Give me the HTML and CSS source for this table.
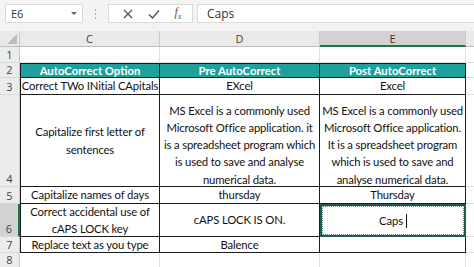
FILE: index.html
```html
<!DOCTYPE html>
<html>
<head>
<meta charset="utf-8">
<link rel="stylesheet" href="styles.css">
</head>
<body>
<div class="app">
  <div class="formula-bar">
    <div class="namebox"><span>E6</span><span class="caret"></span></div>
    <div class="grip"><i></i><i></i><i></i></div>
    <div class="fx-buttons">
      <svg width="12" height="12" viewBox="0 0 12 12"><path d="M2 2 L10 10 M10 2 L2 10" stroke="#555" stroke-width="1.3" fill="none"/></svg>
      <svg width="14" height="12" viewBox="0 0 14 12"><path d="M2 6.5 L5.5 10 L12 2.5" stroke="#555" stroke-width="1.5" fill="none"/></svg>
      <span class="fx">f<sub>x</sub></span>
    </div>
    <div class="formula-input">Caps</div>
  </div>

  <div class="sheet">
    <div class="corner"><span class="tri"></span></div>
    <div class="colhead">C</div>
    <div class="colhead">D</div>
    <div class="colhead sel">E</div>
    <div class="colhead rest"></div>

    <div class="rowhead">1</div>
    <div class="cell blank"></div><div class="cell blank"></div><div class="cell blank"></div><div class="cell blank rest"></div>

    <div class="rowhead">2</div>
    <div class="cell th l">AutoCorrect Option</div>
    <div class="cell th">Pre AutoCorrect</div>
    <div class="cell th">Post AutoCorrect</div>
    <div class="cell blank rest"></div>

    <div class="rowhead">3</div>
    <div class="cell td l">Correct TWo INitial CApitals</div>
    <div class="cell td">EXcel</div>
    <div class="cell td">Excel</div>
    <div class="cell blank rest"></div>

    <div class="rowhead">4</div>
    <div class="cell td l">Capitalize first letter of<br>sentences</div>
    <div class="cell td long"><span class="wrap">MS Excel is a commonly used<br>Microsoft Office application. it<br>is a spreadsheet program which<br>is used to save and analyse<br>numerical data.</span></div>
    <div class="cell td long"><span class="wrap">MS Excel is a commonly used<br>Microsoft Office application.<br>It is a spreadsheet program<br>which is used to save and<br>analyse numerical data.</span></div>
    <div class="cell blank rest"></div>

    <div class="rowhead">5</div>
    <div class="cell td l">Capitalize names of days</div>
    <div class="cell td">thursday</div>
    <div class="cell td">Thursday</div>
    <div class="cell blank rest"></div>

    <div class="rowhead sel">6</div>
    <div class="cell td l">Correct accidental use of<br>cAPS LOCK key</div>
    <div class="cell td">cAPS LOCK IS ON.</div>
    <div class="cell td active"><span>Caps</span><span class="cursor"></span></div>
    <div class="cell blank rest"></div>

    <div class="rowhead">7</div>
    <div class="cell td l last">Replace text as you type</div>
    <div class="cell td last">Balence</div>
    <div class="cell td last"></div>
    <div class="cell blank rest"></div>

    <div class="rowhead">8</div>
    <div class="cell blank"></div><div class="cell blank"></div><div class="cell blank"></div><div class="cell blank rest"></div>
  </div>
</div>
</body>
</html>
```

FILE: styles.css
```css
* { box-sizing: border-box; }
html, body { margin: 0; padding: 0; }
body {
  width: 474px;
  height: 267px;
  overflow: hidden;
  background: #ffffff;
  font-family: Lato, "Open Sans", sans-serif;
}
.app { width: 474px; height: 267px; display: flex; flex-direction: column; }

.formula-bar {
  height: 31px;
  background: #f3f3f3;
  display: flex;
  align-items: flex-start;
  padding: 4px 0 0 5px;
  flex-shrink: 0;
}
.namebox {
  width: 78px;
  height: 19px;
  background: #fff;
  border: 1px solid #dadada;
  display: flex;
  align-items: center;
  justify-content: space-between;
  padding: 0 4px 0 5px;
  font-size: 11px;
  color: #333;
  font-family: "Open Sans", sans-serif;
}
.caret {
  width: 0; height: 0;
  border-left: 3px solid transparent;
  border-right: 3px solid transparent;
  border-top: 3px solid #666;
  margin-right: 1px;
}
.grip {
  width: 25px;
  height: 19px;
  display: flex;
  flex-direction: column;
  align-items: center;
  justify-content: center;
  gap: 2px;
}
.grip i { display: block; width: 1px; height: 2px; background: #aaa; }
.fx-buttons {
  width: 85px;
  height: 19px;
  background: #fff;
  border: 1px solid #dadada;
  display: flex;
  align-items: center;
  justify-content: space-around;
  padding: 0 4px 0 6px;
}
.fx {
  font-family: "Liberation Serif", serif;
  font-style: italic;
  font-size: 12px;
  color: #555;
  line-height: 1;
}
.fx sub { font-size: 8px; }
.formula-input {
  flex: 1;
  height: 19px;
  margin-left: 4px;
  background: #fff;
  border: 1px solid #dadada;
  border-right: none;
  font-family: "Open Sans", sans-serif;
  font-size: 12px;
  color: #333;
  padding-left: 9px;
  line-height: 17px;
}

.sheet {
  flex: 1;
  display: grid;
  grid-template-columns: 20px 140px 160px 146px 1fr;
  grid-template-rows: 16px 16px 15px 17px 92px 17px 33px 16px 1fr;
  background: #fff;
}
.corner {
  background: #e9e9e9;
  border-right: 1px solid #c8c8c8;
  border-bottom: 1px solid #bdbdbd;
  position: relative;
}
.tri {
  position: absolute;
  right: 2px;
  bottom: 2px;
  width: 0; height: 0;
  border-left: 10px solid transparent;
  border-bottom: 10px solid #bdbdbd;
}
.colhead {
  background: #e9e9e9;
  border-right: 1px solid #c8c8c8;
  border-bottom: 1px solid #bdbdbd;
  font-family: "Open Sans", sans-serif;
  font-size: 11px;
  color: #444;
  display: flex;
  align-items: center;
  justify-content: center;
}
.colhead.sel {
  background: #d2d2d2;
  border-bottom: 2px solid #217346;
  color: #333;
}
.colhead.rest { border-right: none; }
.rowhead {
  background: #ececec;
  border-right: 1px solid #c8c8c8;
  border-bottom: 1px solid #d8d8d8;
  font-family: "Open Sans", sans-serif;
  font-size: 11px;
  color: #444;
  display: flex;
  align-items: flex-end;
  justify-content: center;
  line-height: 14px;
  padding-bottom: 0;
}
.rowhead.sel { background: #d2d2d2; border-right: 2px solid #217346; }

.cell {
  font-size: 11.3px;
  letter-spacing: -0.15px;
  color: #111;
  display: flex;
  align-items: center;
  justify-content: center;
  text-align: center;
  line-height: 17.3px;
  white-space: nowrap;
}
.cell.blank { border-right: 1px solid #e1e1e1; border-bottom: 1px solid #e1e1e1; }
.cell.blank.rest { border-right: none; background: #fff; }
.cell.th {
  background: #1fa09c;
  color: #fff;
  font-weight: bold;
  letter-spacing: 0;
  border-right: 1px solid #1a1a1a;
  border-top: 1px solid #1a1a1a;
  border-bottom: 1px solid #1a1a1a;
}
.cell.td {
  border-right: 1px solid #1a1a1a;
  border-bottom: 1px solid #1a1a1a;
}
.cell.l { border-left: 1px solid #1a1a1a; }
.cell.long { align-items: flex-end; }
.wrap { display: block; margin-bottom: -2px; }
.cell.active {
  border: 2px solid #1d5a50;
  outline: 1px dotted #5d8f86;
  outline-offset: -3px;
}
.cursor {
  display: inline-block;
  width: 1px;
  height: 14px;
  background: #111;
  margin-left: 3px;
}
```
